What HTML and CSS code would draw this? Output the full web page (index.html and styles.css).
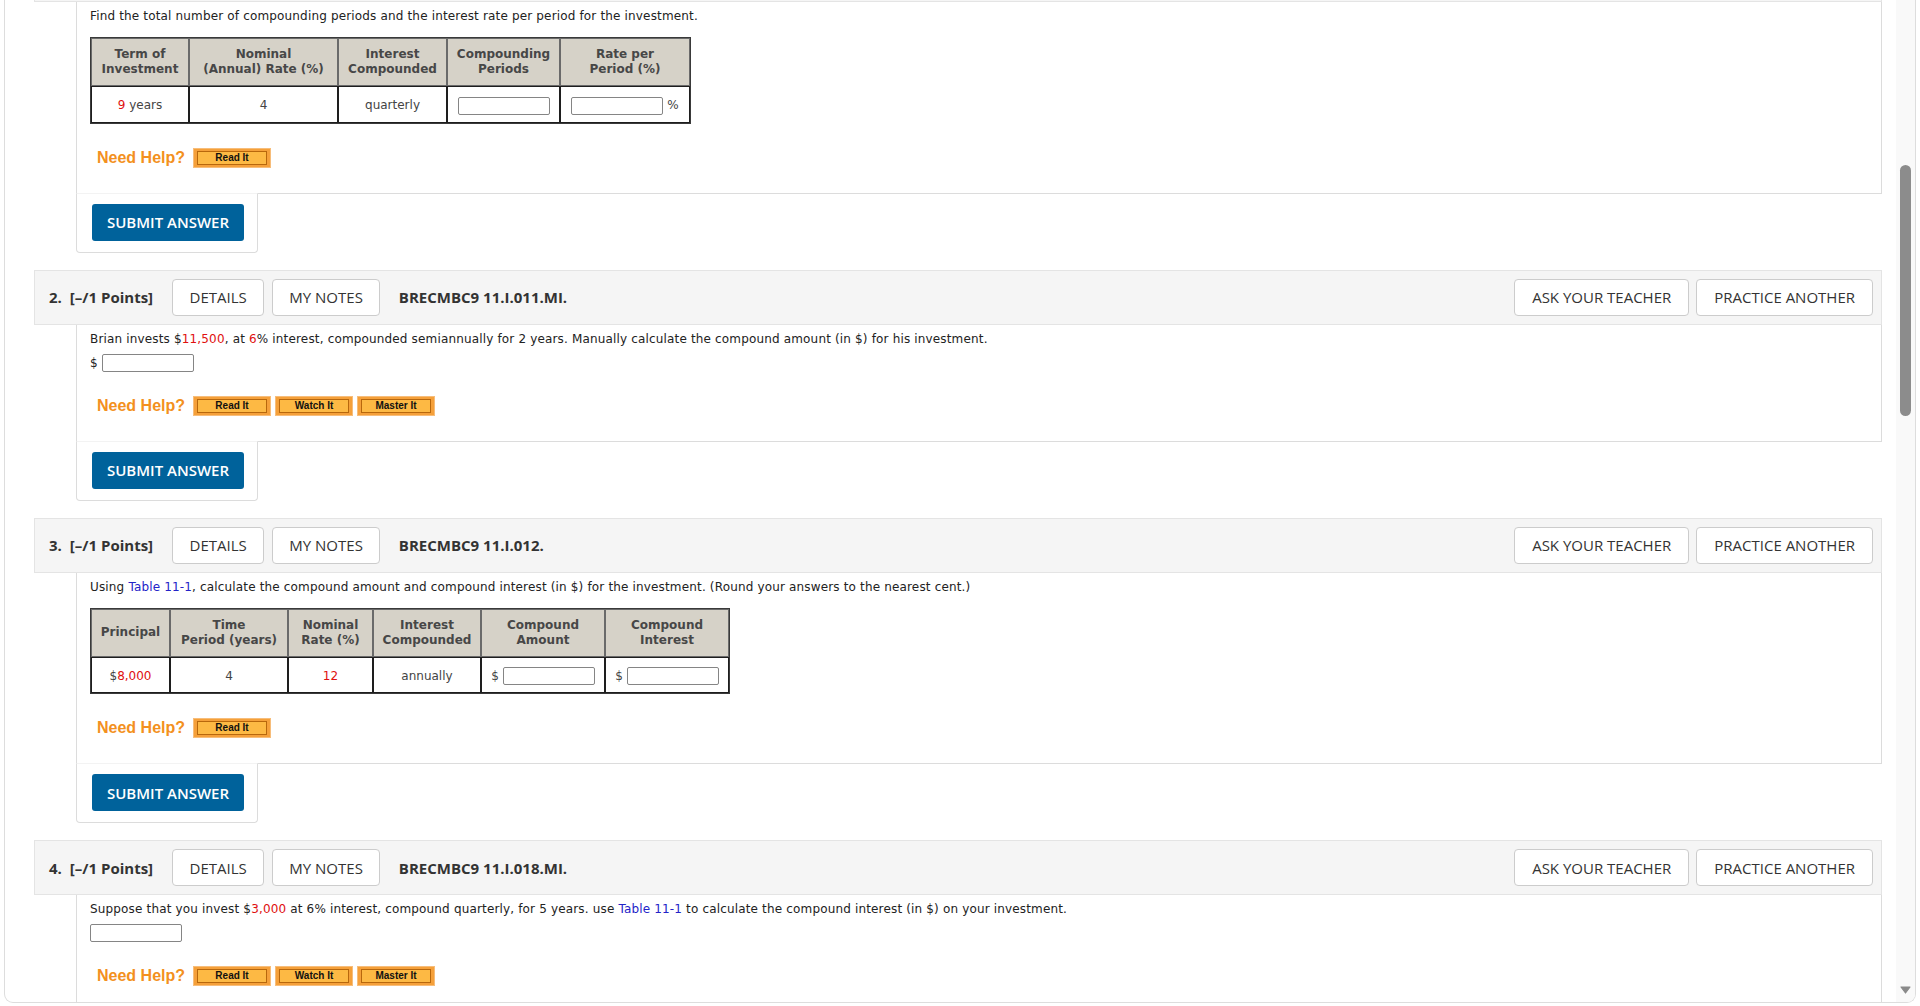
FILE: index.html
```html
<!DOCTYPE html>
<html lang="en">
<head>
<meta charset="utf-8">
<title>Assignment</title>
<link rel="stylesheet" href="styles.css">
</head>
<body>
<div class="frame">
  <div class="content">

    <section class="q">
      <div class="qhead"></div>
      <div class="qbody">
        <p class="qtext">Find the total number of compounding periods and the interest rate per period for the investment.</p>
        <table class="dt t1">
          <tr>
            <th>Term of<br>Investment</th>
            <th>Nominal<br>(Annual) Rate (%)</th>
            <th>Interest<br>Compounded</th>
            <th>Compounding<br>Periods</th>
            <th>Rate per<br>Period (%)</th>
          </tr>
          <tr>
            <td><span class="red">9</span> years</td>
            <td>4</td>
            <td>quarterly</td>
            <td><input class="box" type="text"></td>
            <td><input class="box" type="text"> %</td>
          </tr>
        </table>
        <div class="help">
          <span class="nh">Need Help?</span>
          <span class="rb"><span>Read It</span></span>
        </div>
      </div>
      <div class="sbox"><button class="submit">SUBMIT ANSWER</button></div>
    </section>

    <section class="q">
      <div class="qhead">
        <span class="qnum">2.</span><span class="qpts">[–/1 Points]</span>
        <button class="btn first">DETAILS</button><button class="btn">MY NOTES</button>
        <span class="qcode">BRECMBC9 11.I.011.MI.</span>
        <div class="right"><button class="btn">ASK YOUR TEACHER</button><button class="btn">PRACTICE ANOTHER</button></div>
      </div>
      <div class="qbody">
        <p class="qtext">Brian invests $<span class="red">11,500</span>, at <span class="red">6</span>% interest, compounded semiannually for 2 years. Manually calculate the compound amount (in $) for his investment.</p>
        <div class="answer"><span class="cur">$</span><input class="box" type="text"></div>
        <div class="help">
          <span class="nh">Need Help?</span>
          <span class="rb"><span>Read It</span></span>
          <span class="rb"><span>Watch It</span></span>
          <span class="rb"><span>Master It</span></span>
        </div>
      </div>
      <div class="sbox"><button class="submit">SUBMIT ANSWER</button></div>
    </section>

    <section class="q">
      <div class="qhead">
        <span class="qnum">3.</span><span class="qpts">[–/1 Points]</span>
        <button class="btn first">DETAILS</button><button class="btn">MY NOTES</button>
        <span class="qcode">BRECMBC9 11.I.012.</span>
        <div class="right"><button class="btn">ASK YOUR TEACHER</button><button class="btn">PRACTICE ANOTHER</button></div>
      </div>
      <div class="qbody">
        <p class="qtext">Using <span class="link">Table 11-1</span>, calculate the compound amount and compound interest (in $) for the investment. (Round your answers to the nearest cent.)</p>
        <table class="dt t3">
          <tr>
            <th>Principal</th>
            <th>Time<br>Period (years)</th>
            <th>Nominal<br>Rate (%)</th>
            <th>Interest<br>Compounded</th>
            <th>Compound<br>Amount</th>
            <th>Compound<br>Interest</th>
          </tr>
          <tr>
            <td>$<span class="red">8,000</span></td>
            <td>4</td>
            <td><span class="red">12</span></td>
            <td>annually</td>
            <td>$ <input class="box" type="text"></td>
            <td>$ <input class="box" type="text"></td>
          </tr>
        </table>
        <div class="help">
          <span class="nh">Need Help?</span>
          <span class="rb"><span>Read It</span></span>
        </div>
      </div>
      <div class="sbox"><button class="submit">SUBMIT ANSWER</button></div>
    </section>

    <section class="q">
      <div class="qhead">
        <span class="qnum">4.</span><span class="qpts">[–/1 Points]</span>
        <button class="btn first">DETAILS</button><button class="btn">MY NOTES</button>
        <span class="qcode">BRECMBC9 11.I.018.MI.</span>
        <div class="right"><button class="btn">ASK YOUR TEACHER</button><button class="btn">PRACTICE ANOTHER</button></div>
      </div>
      <div class="qbody">
        <p class="qtext">Suppose that you invest $<span class="red">3,000</span> at 6% interest, compound quarterly, for 5 years. use <span class="link">Table 11-1</span> to calculate the compound interest (in $) on your investment.</p>
        <div class="answer"><input class="box" type="text"></div>
        <div class="help">
          <span class="nh">Need Help?</span>
          <span class="rb"><span>Read It</span></span>
          <span class="rb"><span>Watch It</span></span>
          <span class="rb"><span>Master It</span></span>
        </div>
      </div>
    </section>

  </div>
  <div class="scrollbar">
    <div class="thumb"></div>
    <svg class="arrow" width="11" height="8" viewBox="0 0 11 8"><path d="M1 1 H10 L5.5 7 Z" fill="#8a8a8a" stroke="#8a8a8a" stroke-width="1.2" stroke-linejoin="round"/></svg>
  </div>
</div>
</body>
</html>
```

FILE: styles.css
```css
* { box-sizing: border-box; }

html, body {
  margin: 0;
  height: 1006px;
  overflow: hidden;
  background: #fff;
}

body {
  font-family: "DejaVu Sans", Verdana, sans-serif;
  font-size: 12px;
  color: #222;
}

.frame {
  margin-left: 4px;
  width: 1912px;
  height: 1003px;
  border: 1px solid #dddddd;
  border-top: none;
  border-radius: 0 0 9px 9px;
  display: flex;
  overflow: hidden;
}

.content {
  flex: 1;
  min-width: 0;
  padding: 0 14px 0 29px;
  margin-top: -53px;
}

/* scrollbar */
.scrollbar {
  width: 19px;
  flex: none;
  background: #f9f9f9;
  display: flex;
  flex-direction: column;
  padding: 165px 0 8px 4px;
}
.thumb {
  width: 11px;
  height: 251px;
  border-radius: 6px;
  background: #8c8c8c;
}
.arrow {
  margin-top: auto;
  display: block;
}

/* question header */
.qhead {
  display: flex;
  align-items: center;
  height: 55px;
  padding: 0 8px 0 14px;
  background: #f5f5f5;
  border: 1px solid #e4e4e4;
  font-family: "Open Sans", sans-serif;
  font-size: 15px;
  color: #333;
  white-space: nowrap;
}
.qnum { font-weight: 700; }
.qpts { font-weight: 700; margin-left: 8px; }
.qcode { font-weight: 700; margin-left: 19px; }

.btn {
  height: 37px;
  padding: 0 16px;
  margin: 0;
  border: 1px solid #cccccc;
  border-radius: 4px;
  background: #fff;
  font-family: "Open Sans", sans-serif;
  font-size: 15px;
  color: #333;
}
.btn.first { margin-left: 19px; padding: 0 16.5px; }
.btn + .btn { margin-left: 8px; }
.right {
  margin-left: auto;
  display: flex;
}
.right .btn { padding: 0 17px; }
.right .btn + .btn { margin-left: 7px; }

/* question body */
.qbody {
  margin-left: 42px;
  border: 1px solid #dcdcdc;
  border-top: none;
  padding: 5px 14px 25px 13px;
}
.qtext {
  margin: 0;
  line-height: 18px;
  white-space: nowrap;
  letter-spacing: 0.16px;
}
.red { color: #e0100f; }
.link { color: #2323c8; }

.answer {
  margin-top: 6px;
  height: 18px;
  display: flex;
  align-items: center;
}
.cur { margin-right: 4px; }

.box {
  width: 92px;
  height: 18px;
  margin: 0;
  padding: 0;
  border: 1px solid #858585;
  border-radius: 2px;
  background: #fff;
  vertical-align: middle;
}

/* data tables */
.dt {
  margin-top: 12px;
  border-collapse: separate;
  border-spacing: 0;
  border: 1px solid #3a3a3a;
}
.dt th {
  background: #d6d2c8;
  color: #474747;
  font-weight: bold;
  font-size: 12px;
  line-height: 15px;
  padding: 8px 2px;
  border: 1px solid #6a6a6a;
  text-align: center;
  vertical-align: middle;
  white-space: nowrap;
}
.dt td {
  padding: 9px 4px 7px;
  line-height: 18px;
  border: 1px solid #1e1e1e;
  text-align: center;
  color: #444;
  white-space: nowrap;
}
.t1 th:nth-child(1) { width: 98px; }
.t1 th:nth-child(2) { width: 149px; }
.t1 th:nth-child(3) { width: 109px; }
.t1 th:nth-child(4) { width: 113px; }
.t1 th:nth-child(5) { width: 130px; }
.t3 th:nth-child(1) { width: 79px; }
.t3 th:nth-child(2) { width: 118px; }
.t3 th:nth-child(3) { width: 85px; }
.t3 th:nth-child(4) { width: 108px; }
.t3 th:nth-child(5) { width: 124px; }
.t3 th:nth-child(6) { width: 124px; }

/* need help */
.help {
  margin-top: 24px;
  margin-left: 7px;
  height: 20px;
  display: flex;
  align-items: center;
}
.nh {
  font-family: "Liberation Sans", Arial, sans-serif;
  font-weight: bold;
  font-size: 16px;
  color: #f39020;
  margin-right: 8px;
}
.rb {
  display: block;
  width: 78px;
  height: 20px;
  border: 1px solid #f7bd7a;
  background: #f5a03a;
  padding: 2px 3px;
  margin-right: 4px;
}
.rb span {
  display: block;
  height: 14px;
  border: 1px solid #b8670c;
  background: #fdb944;
  font-family: "Liberation Sans", Arial, sans-serif;
  font-weight: bold;
  font-size: 10px;
  line-height: 12px;
  color: #111;
  text-align: center;
}

/* submit */
.sbox {
  margin: -1px 0 17px 42px;
  width: 182px;
  border: 1px solid #dcdcdc;
  border-top: 1px solid #f3f3f3;
  border-radius: 0 0 4px 4px;
  padding: 10px 12px 11px 15px;
  background: #fff;
}
.submit {
  display: block;
  width: 152px;
  height: 37px;
  border: none;
  border-radius: 3px;
  background: #00629b;
  color: #fff;
  font-family: "Open Sans", sans-serif;
  font-weight: 600;
  font-size: 15px;
  padding: 0;
}
```
